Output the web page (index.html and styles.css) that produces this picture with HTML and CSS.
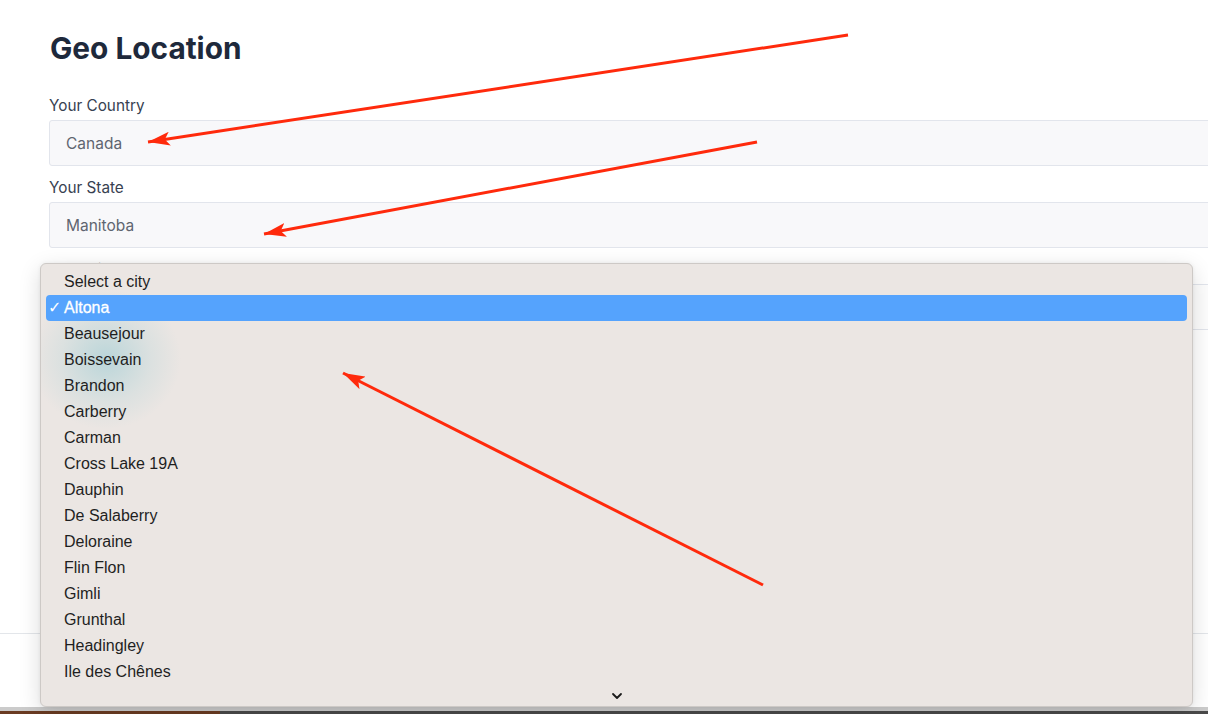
FILE: index.html
```html
<!DOCTYPE html>
<html lang="en">
<head>
<meta charset="utf-8">
<title>Geo Location</title>
<link rel="stylesheet" href="styles.css">
</head>
<body>
<div class="screen">
  <section class="content">
    <h1 class="title">Geo Location</h1>
    <div class="field">
      <label class="label">Your Country</label>
      <div class="input">Canada</div>
    </div>
    <div class="field">
      <label class="label">Your State</label>
      <div class="input">Manitoba</div>
    </div>
    <div class="field">
      <label class="label">Your City</label>
      <div class="input input-white"></div>
    </div>
  </section>
  <div class="spacer"></div>
  <div class="dock-edge"><div class="dock-left"></div><div class="dock-right"></div></div>

  <div class="dropdown">
    <div class="glow"></div>
    <ul class="options">
      <li class="opt">Select a city</li>
      <li class="opt selected"><span class="check">✓</span>Altona</li>
      <li class="opt">Beausejour</li>
      <li class="opt">Boissevain</li>
      <li class="opt">Brandon</li>
      <li class="opt">Carberry</li>
      <li class="opt">Carman</li>
      <li class="opt">Cross Lake 19A</li>
      <li class="opt">Dauphin</li>
      <li class="opt">De Salaberry</li>
      <li class="opt">Deloraine</li>
      <li class="opt">Flin Flon</li>
      <li class="opt">Gimli</li>
      <li class="opt">Grunthal</li>
      <li class="opt">Headingley</li>
      <li class="opt">Ile des Chênes</li>
    </ul>
    <div class="more">
      <svg width="12" height="8" viewBox="0 0 12 8"><path d="M2 2 L6 6 L10 2" fill="none" stroke="#1a1a1a" stroke-width="1.8" stroke-linecap="round" stroke-linejoin="round"/></svg>
    </div>
  </div>

  <svg class="arrows" width="1208" height="714" viewBox="0 0 1208 714">
    <defs>
      <marker id="head" markerUnits="userSpaceOnUse" markerWidth="24" markerHeight="14" refX="22" refY="7" orient="auto">
        <path d="M0 0 L22 7 L0 14 L5 7 Z" fill="#ff2a0c"/>
      </marker>
    </defs>
    <line x1="848" y1="35" x2="148" y2="142" stroke="#ff2a0c" stroke-width="3" marker-end="url(#head)"/>
    <line x1="757" y1="142" x2="264" y2="234" stroke="#ff2a0c" stroke-width="3" marker-end="url(#head)"/>
    <line x1="763" y1="585" x2="343" y2="373" stroke="#ff2a0c" stroke-width="3" marker-end="url(#head)"/>
  </svg>
</div>
</body>
</html>
```
FILE: styles.css
```css
* { box-sizing: border-box; }
html, body { margin: 0; padding: 0; }
body {
  background: #ffffff;
  font-family: Inter, "Noto Sans", "Liberation Sans", sans-serif;
  overflow: hidden;
}
.screen {
  position: relative;
  width: 1208px;
  height: 714px;
  display: flex;
  flex-direction: column;
  overflow: hidden;
}
.content {
  height: 634px;
  border-bottom: 1px solid #e3e6ea;
  padding: 28px 0 0 49px;
  display: flex;
  flex-direction: column;
}
.title {
  margin: 0 0 29px 1px;
  font-size: 29.8px;
  line-height: 40px;
  font-weight: 700;
  color: #1e293b;
  letter-spacing: 0;
}
.field {
  display: flex;
  flex-direction: column;
  margin-bottom: 13px;
}
.label {
  font-size: 15.3px;
  line-height: 18px;
  color: #374151;
  margin-bottom: 5px;
}
.input {
  height: 46px;
  width: 1200px;
  background: #f8f8fa;
  border: 1px solid #e2e5ec;
  border-radius: 3px;
  padding: 0 16px;
  display: flex;
  align-items: center;
  font-size: 15.5px;
  color: #5f6570;
}
.input-white { background: #fdfdfd; }
.spacer { flex: 1; }
.dock-edge {
  height: 7px;
  border-top: 4px solid #cbcbcb;
  display: flex;
}
.dock-left { width: 220px; background: #6a3b22; }
.dock-right { flex: 1; background: #4a4a4a; }

.dropdown {
  position: absolute;
  left: 40px;
  top: 263px;
  width: 1153px;
  height: 444px;
  background: #ebe6e3;
  border: 1px solid #cdc9c6;
  border-radius: 6px;
  box-shadow: 0 6px 22px rgba(0,0,0,0.14), 0 0 4px rgba(0,0,0,0.06);
  font-family: "Liberation Sans", Arial, sans-serif;
  overflow: hidden;
}
.glow {
  position: absolute;
  left: -10px;
  top: 25px;
  width: 150px;
  height: 140px;
  border-radius: 50%;
  background: radial-gradient(closest-side, rgba(170,208,214,0.75), rgba(190,215,218,0.35) 60%, rgba(235,230,227,0) 100%);
}
.options {
  position: relative;
  list-style: none;
  margin: 0;
  padding: 5px 5px 0 5px;
}
.opt {
  height: 26px;
  line-height: 26px;
  padding-left: 18px;
  font-size: 16px;
  color: #1f1f1f;
  position: relative;
}
.opt.selected {
  height: 26px;
  background: #55a3fd;
  color: #ffffff;
  border-radius: 4px;
  -webkit-text-stroke: 0.3px #ffffff;
}
.check {
  position: absolute;
  left: 2px;
  top: 0;
  font-size: 16px;
  font-family: "DejaVu Sans", sans-serif;
  color: #ffffff;
  -webkit-text-stroke: 0;
}
.more {
  position: absolute;
  left: 0;
  right: 0;
  bottom: 6px;
  display: flex;
  justify-content: center;
  padding-left: 1px;
}
.arrows {
  position: absolute;
  left: 0;
  top: 0;
  pointer-events: none;
}
```
